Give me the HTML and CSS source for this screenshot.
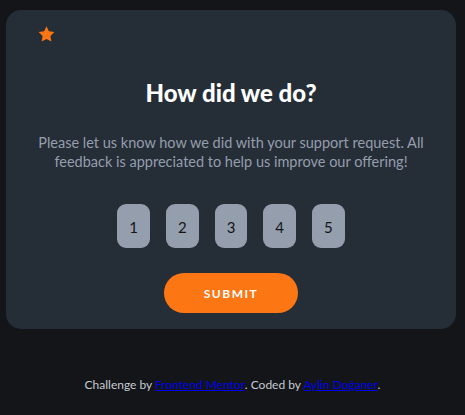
FILE: index.html
```html
<!DOCTYPE html>
<html lang="en">
<head>
<meta charset="utf-8">
<title>Rating</title>
<link rel="stylesheet" href="styles.css">
</head>
<body>
<main class="card">
  <div class="star-wrap">
    <svg class="star" viewBox="0 0 17 16" width="17" height="16" aria-hidden="true">
      <path d="M8.5 0.3l2.4 5 5.5 0.8-4 3.9 0.95 5.5-4.85-2.6-4.85 2.6 0.95-5.5-4-3.9 5.5-0.8z" fill="#FC7614"/>
    </svg>
  </div>
  <h1 class="title">How did we do?</h1>
  <p class="text">Please let us know how we did with your support request. All feedback is appreciated to help us improve our offering!</p>
  <div class="ratings">
    <button class="rate">1</button>
    <button class="rate">2</button>
    <button class="rate">3</button>
    <button class="rate">4</button>
    <button class="rate">5</button>
  </div>
  <button class="submit">SUBMIT</button>
</main>
<footer class="attribution">
  Challenge by <a href="#">Frontend Mentor</a>. Coded by <a href="#">Aylin Doğaner</a>.
</footer>
</body>
</html>
```

FILE: styles.css
```css
html, body {
  margin: 0;
  padding: 0;
}
body {
  background: #131518;
  font-family: Lato, "Open Sans", sans-serif;
  padding: 10px 0 0 6px;
  min-height: 405px;
}
.card {
  box-sizing: border-box;
  width: 450px;
  height: 319px;
  background: #252d37;
  border-radius: 15px;
  padding: 16px 24px 0 24px;
  display: flex;
  flex-direction: column;
  align-items: center;
}
.star-wrap {
  align-self: flex-start;
  height: 17px;
  margin-left: 8px;
}
.star {
  display: block;
}
.title {
  margin: 35px 0 0;
  color: #ffffff;
  font-size: 24px;
  font-weight: 900;
  line-height: 30px;
}
.text {
  margin: 25px 0 0;
  color: #959eac;
  font-size: 14.5px;
  line-height: 19px;
  text-align: center;
}
.ratings {
  display: flex;
  gap: 16px;
  margin-top: 33px;
}
.rate {
  height: 44px;
  min-width: 30px;
  padding: 0 12px;
  border: 0;
  border-radius: 9px;
  background: #959eac;
  color: #131518;
  font-family: inherit;
  font-size: 15px;
  padding-top: 2px;
}
.submit {
  margin-top: 25px;
  width: 134px;
  height: 40px;
  border: 0;
  border-radius: 20px;
  background: #fc7614;
  color: #ffffff;
  font-family: inherit;
  font-size: 12px;
  font-weight: 700;
  letter-spacing: 1.5px;
}
.attribution {
  margin-top: 48px;
  margin-left: -6px;
  text-align: center;
  font-size: 12px;
  color: #c6cad4;
}
.attribution a {
  color: #0000ee;
}
```
